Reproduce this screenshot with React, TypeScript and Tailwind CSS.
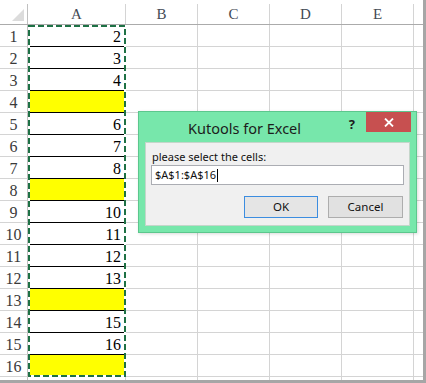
import React from "react";

const values: (number | null)[] = [2, 3, 4, null, 6, 7, 8, null, 10, 11, 12, 13, null, 15, 16, null];
const cols = ["B", "C", "D", "E"];

function Corner() {
  return (
    <svg width="28" height="20" viewBox="0 0 28 20" className="block">
      <polygon points="24,5 24,17 12,17" fill="#dcdcdc" />
    </svg>
  );
}

function Selection() {
  // marching ants around A1:A16
  return (
    <svg className="absolute left-[28px] top-[25px]" width="98" height="352" viewBox="0 0 98 352">
      <rect x="1" y="1" width="96" height="350" fill="none" stroke="#ffffff" strokeWidth="2" />
      <rect x="1" y="1" width="96" height="350" fill="none" stroke="#1e7145" strokeWidth="2" strokeDasharray="6 3" />
    </svg>
  );
}

function Dialog() {
  return (
    <div className="absolute left-[138px] top-[111px] w-[279px] h-[122px] border border-[#5cc78d] bg-[#77e7ab] shadow-[1px_1px_3px_rgba(0,0,0,0.15)] font-['Noto_Sans',sans-serif]">
      <div className="flex h-[30px]">
        <div className="flex-1 pl-[49px] pt-[2px] text-[14.5px] leading-[28px] text-[#1c1c1c]">Kutools for Excel</div>
        <div className="pt-[3px] text-[13px] font-bold leading-[18px] text-[#1c1c1c]">?</div>
        <div className="ml-[11px] mr-[5px] flex h-[20px] w-[45px] items-center justify-center bg-[#c75050]">
          <svg width="10" height="9" viewBox="0 0 10 9">
            <path d="M1 0.5 L9 8.5 M9 0.5 L1 8.5" stroke="#ffffff" strokeWidth="1.8" />
          </svg>
        </div>
      </div>
      <div className="ml-[6px] h-[84px] w-[265px] border border-[#c4d6ca] bg-[#f0f0f0] pl-[5px] pt-[6px]">
        <div className="pl-[1px] text-[11px] leading-[16px] text-[#111]">please select the cells:</div>
        <div className="flex h-[20px] w-[253px] items-center border border-[#abadb3] bg-white pl-[3px] text-[11px] text-[#111]">
          <span>$A$1:$A$16</span>
          <span className="ml-[1px] h-[13px] w-[1px] bg-black" />
        </div>
        <div className="mt-[11px] flex w-[252px] justify-end gap-[10px] text-[11.5px] text-[#111]">
          <div className="flex h-[22px] w-[74px] items-center justify-center border border-[#3c8de0] bg-[#e5e5e5]">OK</div>
          <div className="flex h-[22px] w-[75px] items-center justify-center border border-[#adadad] bg-[#e1e1e1]">Cancel</div>
        </div>
      </div>
    </div>
  );
}

export default function App() {
  return (
    <div className="relative h-[383px] w-[426px] overflow-hidden bg-white">
      <div className="h-[383px] w-[426px] overflow-hidden border-b-[3px] border-r-[3px] border-[#a6a6a6] bg-white pt-[4px] font-['Liberation_Serif',serif] text-[16px] text-[#3c3c3c]">
        <div className="flex h-[21px] border-b border-[#ababab] text-[15px] text-[#444a55]">
          <div className="w-[28px] border-r border-[#c0c0c0]">
            <Corner />
          </div>
          <div className="flex w-[98px] items-center justify-center border-r border-[#d4d4d4]">A</div>
          {cols.map((c) => (
            <div key={c} className="flex w-[72px] items-center justify-center border-r border-[#d4d4d4]">
              {c}
            </div>
          ))}
          <div className="flex-1" />
        </div>
        {[...values, undefined].map((v, i) => (
          <div key={i} className="flex h-[22px]">
            <div className="w-[28px] border-b border-r border-[#d4d4d4] border-r-[#c0c0c0] pt-[2px] text-center leading-[19px] text-[#3a3a3a]">
              {v === undefined ? "" : i + 1}
            </div>
            {v === null ? (
              <div className="w-[98px] border-b border-r border-b-black border-r-[#d4d4d4] bg-[#ffff00]" />
            ) : v === undefined ? (
              <div className="w-[98px] border-b border-r border-[#d4d4d4]" />
            ) : (
              <div className="w-[98px] border-b border-r border-b-black border-r-[#d4d4d4] pr-[4px] pt-[2px] text-right leading-[19px] text-black">
                {v}
              </div>
            )}
            {cols.map((c) => (
              <div key={c} className="w-[72px] border-b border-r border-[#d4d4d4]" />
            ))}
            <div className="flex-1 border-b border-[#d4d4d4]" />
          </div>
        ))}
      </div>
      <Selection />
      <Dialog />
    </div>
  );
}
